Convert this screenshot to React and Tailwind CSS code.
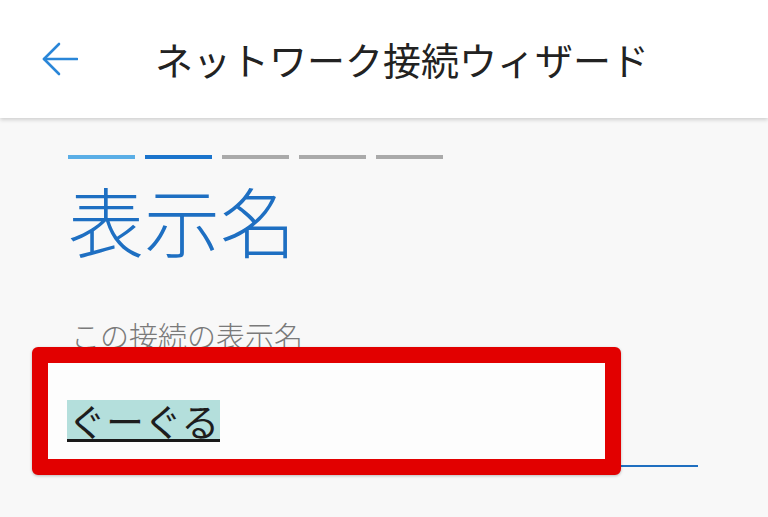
import React from 'react';

const steps = ['bg-[#5aaee6]', 'bg-[#1b74cc]', 'bg-[#aaaaaa]', 'bg-[#aaaaaa]', 'bg-[#aaaaaa]'];

const App = () => {
    return (
        <div className="w-[768px] h-[517px] overflow-hidden bg-[#f8f8f8] font-['Noto_Sans_CJK_JP','Noto_Sans',sans-serif]">
            {/* Header */}
            <div className="relative z-20 h-[118px] bg-white flex items-center shadow-[0_2px_4px_rgba(0,0,0,0.16)]">
                <div className="w-[155px] pl-[42px] flex items-center">
                    <svg width="36" height="34" viewBox="0 0 36 34" fill="none" stroke="#2a86d8" strokeWidth="2.6" strokeLinecap="round" strokeLinejoin="round">
                        <path d="M2 17 H35" />
                        <path d="M17 2 L2 17 L17 32" />
                    </svg>
                </div>
                <h1 className="text-[38px] leading-none text-[#222]">ネットワーク接続ウィザード</h1>
            </div>

            {/* Body */}
            <div className="relative pl-[68px] pt-[37px]">
                {/* Steps */}
                <div className="flex gap-[10px]">
                    {steps.map((c, i) => (
                        <div key={i} className={`w-[67px] h-[4px] ${c}`}></div>
                    ))}
                </div>

                <h2 className="mt-[22px] text-[76px] leading-none text-[#1e6fc2] font-light">表示名</h2>

                <p className="mt-[64px] text-[29px] leading-none text-[#7a7a7a] ml-[3px] font-light">この接続の表示名</p>

                {/* Annotation box */}
                <div className="absolute left-[32px] top-[229px] w-[589px] h-[128px] border-[16px] border-[#e20000] rounded-[6px] bg-[#fdfdfd] shadow-[0_1px_3px_rgba(0,0,0,0.25)]"></div>

                {/* Input */}
                <div className="w-[630px] pt-[50px] pb-[23px] border-b-2 border-[#1f6fc0]">
                    <span className="relative z-10 inline-block h-[42px] leading-[40px] px-[1px] text-[38px] text-[#1d1d1d] bg-[#b4dfdc] border-b-[3px] border-[#1a1a1a] ml-[-1px]">ぐーぐる</span>
                </div>
            </div>
        </div>
    );
};

export default App;
